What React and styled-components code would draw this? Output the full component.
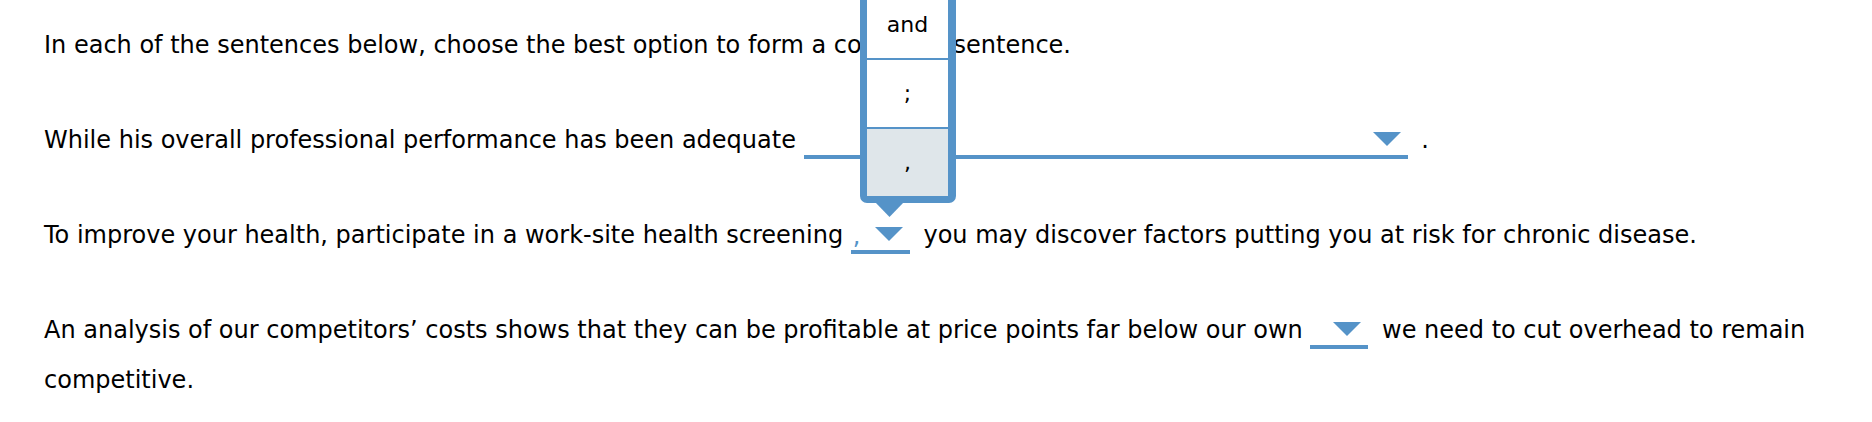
import React from "react";
import styled, { createGlobalStyle } from "styled-components";

const BLUE = "#5593c8";

const GlobalStyle = createGlobalStyle`
  body {
    margin: 0;
    background: #fff;
  }
`;

const Page = styled.div`
  position: relative;
  padding: 20px 44px 0;
  font-family: "DejaVu Sans", Verdana, sans-serif;
  font-size: 24px;
  color: #000;
`;

const Para = styled.p`
  margin: 0 0 45px;
  line-height: 50px;
  &:last-of-type {
    margin-bottom: 0;
  }
`;

const Select = styled.span`
  display: inline-flex;
  align-items: center;
  justify-content: space-between;
  box-sizing: border-box;
  width: ${(p) => p.$width}px;
  height: 36px;
  padding: 0 7px 0 2px;
  margin-right: 6px;
  border-bottom: 4px solid ${BLUE};
  vertical-align: middle;
  color: ${BLUE};
  line-height: 1;
`;

const Value = styled.span`
  padding-top: 4px;
`;

const Caret = () => (
  <svg width="28" height="14" viewBox="0 0 28 14">
    <polygon points="0,0 28,0 14,14" fill={BLUE} />
  </svg>
);

const Menu = styled.div`
  position: absolute;
  left: 860px;
  top: -16px;
  width: 96px;
  box-sizing: border-box;
  display: flex;
  flex-direction: column;
  gap: 2px;
  border: 7px solid ${BLUE};
  border-right-width: 8px;
  border-radius: 0 0 7px 7px;
  background: ${BLUE};
  font-size: 22px;
`;

const Option = styled.div`
  height: 67px;
  display: flex;
  align-items: center;
  justify-content: center;
  background: ${(p) => (p.$active ? "#dfe6ea" : "#fff")};
`;

const Pointer = styled.svg`
  position: absolute;
  left: 8px;
  top: calc(100% + 6px);
`;

export default function App() {
  return (
    <Page>
      <GlobalStyle />
      <Para>
        In each of the sentences below, choose the best option to form a complete sentence.
      </Para>
      <Para>
        While his overall professional performance has been adequate{" "}
        <Select $width={604}>
          <Value />
          <Caret />
        </Select>{" "}
        .
      </Para>
      <Para>
        To improve your health, participate in a work-site health screening{" "}
        <Select $width={59}>
          <Value>,</Value>
          <Caret />
        </Select>{" "}
        you may discover factors putting you at risk for chronic disease.
      </Para>
      <Para>
        An analysis of our competitors’ costs shows that they can be profitable at price points far below our own{" "}
        <Select $width={58}>
          <Value />
          <Caret />
        </Select>{" "}
        we need to cut overhead to remain competitive.
      </Para>
      <Menu>
        <Option>and</Option>
        <Option>;</Option>
        <Option $active>,</Option>
        <Pointer width="29" height="15" viewBox="0 0 29 15">
          <polygon points="0,0 29,0 14.5,15" fill={BLUE} />
        </Pointer>
      </Menu>
    </Page>
  );
}
